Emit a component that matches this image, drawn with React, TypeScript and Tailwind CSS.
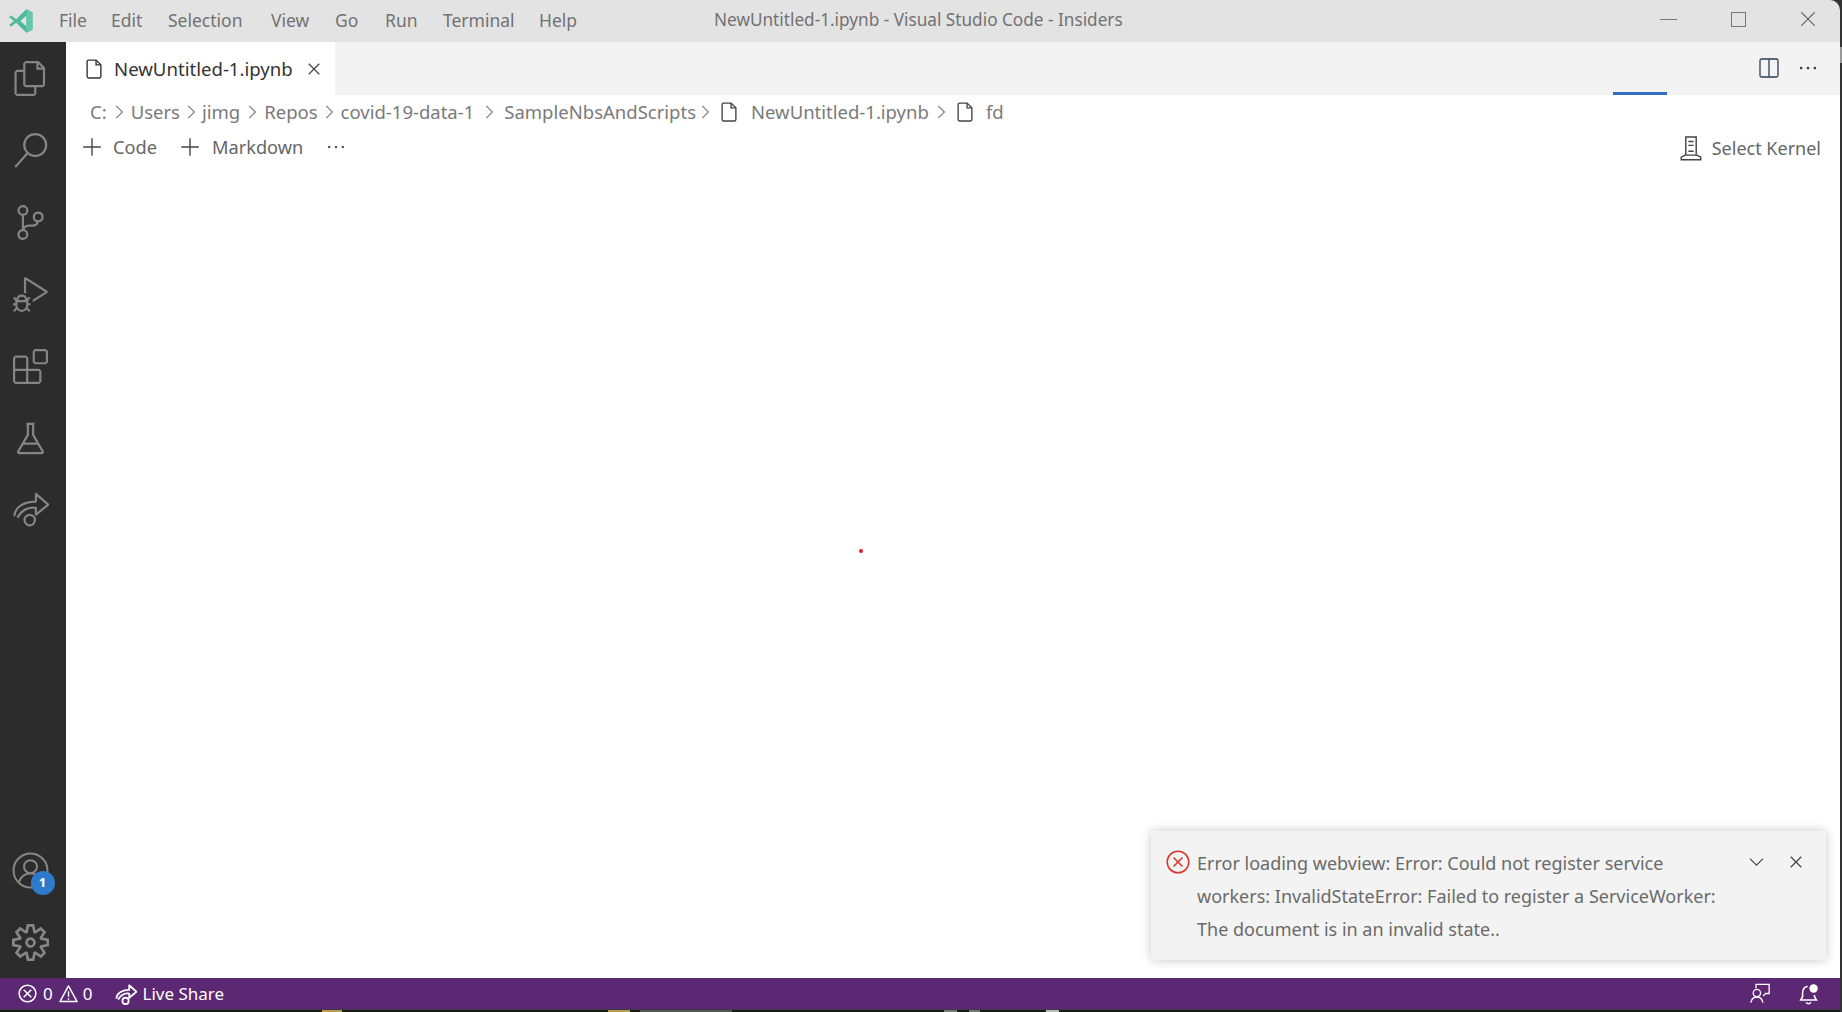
const font = { fontFamily: '"Noto Sans", "Open Sans", sans-serif' };

function Codicon({ d, size = 35, className = "" }: { d: string; size?: number; className?: string }) {
  return (
    <svg width={size} height={size} viewBox="0 0 24 24" fill="currentColor" className={className}>
      <path fillRule="evenodd" clipRule="evenodd" d={d} />
    </svg>
  );
}

const FILES =
  "M17.5 0h-9L7 1.5V6H2.5L1 7.5v15.07L2.5 24h12.07L16 22.57V18h4.7l1.3-1.43V4.5L17.5 0zm0 2.12l2.38 2.38H17.5V2.12zm-3 20.38h-12v-15H7v9.07L8.5 18h6v4.5zm6-6h-12v-15H16V6h4.5v10.5z";
const SEARCH =
  "M15.25 0a8.25 8.25 0 0 0-6.18 13.72L1 22.88l1.12 1 8.05-9.12A8.251 8.251 0 1 0 15.25.01V0zm0 15a6.75 6.75 0 1 1 0-13.5 6.75 6.75 0 0 1 0 13.5z";
const SCM =
  "M21.007 8.222A3.738 3.738 0 0 0 15.045 5.2a3.737 3.737 0 0 0 1.156 6.583 2.988 2.988 0 0 1-2.668 1.67h-2.99a4.456 4.456 0 0 0-2.989 1.165V7.4a3.737 3.737 0 1 0-1.494 0v9.117a3.776 3.776 0 1 0 1.816.099 2.99 2.99 0 0 1 2.668-1.667h2.99a4.484 4.484 0 0 0 4.223-3.039 3.736 3.736 0 0 0 3.25-3.687zM4.565 3.738a2.242 2.242 0 1 1 4.484 0 2.242 2.242 0 0 1-4.484 0zm4.484 16.441a2.242 2.242 0 1 1-4.484 0 2.242 2.242 0 0 1 4.484 0zm8.221-9.715a2.242 2.242 0 1 1 0-4.485 2.242 2.242 0 0 1 0 4.485z";
const DEBUG =
  "M10.94 13.5l-1.32 1.32a3.73 3.73 0 0 0-7.24 0L1.06 13.5 0 14.56l1.72 1.72-.22.22V18H0v1.5h1.5v.08c.077.489.214.966.41 1.42L0 22.94 1.06 24l1.65-1.65A4.308 4.308 0 0 0 6 24a4.31 4.31 0 0 0 3.29-1.65L10.94 24 12 22.94 10.09 21c.198-.464.336-.951.41-1.45v-.1H12V18h-1.5v-1.5l-.22-.22L12 14.56l-1.06-1.06zM6 13.5a2.25 2.25 0 0 1 2.25 2.25h-4.5A2.25 2.25 0 0 1 6 13.5zm3 6a3.33 3.33 0 0 1-3 3 3.33 3.33 0 0 1-3-3v-2.25h6v2.25zm14.76-9.9v1.26L13.5 17.37V15.6l8.5-5.37L9 2v9.46a5.07 5.07 0 0 0-1.5-.72V.63L8.64 0l15.12 9.6z";
const EXTENSIONS =
  "M13.5 1.5L15 0h7.5L24 1.5V9l-1.5 1.5H15L13.5 9V1.5zm1.5 0V9h7.5V1.5H15zM0 15V6l1.5-1.5H9L10.5 6v7.5H18l1.5 1.5v7.5L18 24H1.5L0 22.5V15zm9-1.5V6H1.5v7.5H9zM9 15H1.5v7.5H9V15zm1.5 7.5H18V15h-7.5v7.5z";
const GEAR =
  "M19.85 8.75l4.15.83v4.84l-4.15.83 2.35 3.52-3.43 3.43-3.52-2.35-.83 4.15H9.58l-.83-4.15-3.52 2.35-3.43-3.43 2.35-3.52L0 14.42V9.58l4.15-.83L1.8 5.23 5.23 1.8l3.52 2.35L9.58 0h4.84l.83 4.15 3.52-2.35 3.43 3.43-2.35 3.52zm-1.57 5.07l4-.81v-2l-4-.81-.54-1.3 2.29-3.43-1.43-1.43-3.43 2.29-1.3-.54-.81-4h-2l-.81 4-1.3.54-3.43-2.29-1.43 1.43L6.38 8.9l-.54 1.3-4 .81v2l4 .81.54 1.3-2.29 3.43 1.43 1.43 3.43-2.29 1.3.54.81 4h2l.81-4 1.3-.54 3.43 2.29 1.43-1.43-2.29-3.43.54-1.3zm-8.186-4.672A3.43 3.43 0 0 1 12 8.57 3.44 3.44 0 0 1 15.43 12a3.43 3.43 0 1 1-5.336-2.852zm.956 4.274c.281.188.612.288.95.288A1.7 1.7 0 0 0 13.71 12a1.71 1.71 0 1 0-2.66 1.422z";

function Stroke({ size, children, w = 1.2, vb = 24, className = "" }: { size: number; children: React.ReactNode; w?: number; vb?: number; className?: string }) {
  return (
    <svg width={size} height={size} viewBox={`0 0 ${vb} ${vb}`} fill="none" stroke="currentColor" strokeWidth={w} className={className}>
      {children}
    </svg>
  );
}

function FileIcon({ size = 20 }: { size?: number }) {
  return (
    <Stroke size={size} w={1} vb={16}>
      <path d="M3 2.5 a1 1 0 0 1 1-1 h5.5 l3.5 3.5 v8.5 a1 1 0 0 1-1 1 h-8 a1 1 0 0 1-1-1 z" />
      <path d="M9.5 1.5 v3.5 h3.5" />
    </Stroke>
  );
}

function CloseIcon({ size = 16, w = 1.3 }: { size?: number; w?: number }) {
  return (
    <Stroke size={size} w={w} vb={16}>
      <path d="M2 2 L14 14 M14 2 L2 14" />
    </Stroke>
  );
}

function Chevron() {
  return (
    <Stroke size={18} w={1} vb={16} className="text-[#7a7a7a]">
      <path d="M5.5 2.5 L11 8 L5.5 13.5" />
    </Stroke>
  );
}

function LiveShareIcon({ size = 35, w = 1.5 }: { size?: number; w?: number }) {
  return (
    <Stroke size={size} w={w}>
      <path d="M1.5 17 C2 10.5 8.5 7.5 15.5 7.5 V2.5 L23.5 9.5 L15.5 16 V11.5 C11 11 6.5 12.5 3.5 18" strokeLinejoin="round" />
      <circle cx="11.5" cy="19.5" r="3.4" />
    </Stroke>
  );
}

function Logo() {
  return (
    <svg width="26" height="26" viewBox="0 0 24 24">
      <path d="M17 1.2 L22.6 4 V20 L17 22.8 L7.5 13.6 L3 17 L1 15.6 L5.5 12 L1 8.4 L3 7 L7.5 10.4 Z M17 7 L11.5 12 L17 17 Z" fill="#4fb99b" fillRule="evenodd" />
      <path d="M17 1.2 L22.6 4 V20 L17 22.8 V17 L17 7 Z" fill="#67c7ad" />
    </svg>
  );
}

function Crumb({ text }: { text: string }) {
  return <span className="text-[#7a7a7a]">{text}</span>;
}

const menus: [string, string][] = [
  ["File", "w-[52px]"],
  ["Edit", "w-[57px]"],
  ["Selection", "w-[103px]"],
  ["View", "w-[64px]"],
  ["Go", "w-[50px]"],
  ["Run", "w-[58px]"],
  ["Terminal", "w-[96px]"],
  ["Help", "w-[50px]"],
];

function TitleBar() {
  return (
    <div className="relative flex h-[42px] shrink-0 items-center bg-[#e3e3e3] pb-[2px] text-[17.5px] text-[#727272]">
      <div className="flex w-[59px] shrink-0 justify-center pr-[17px] pt-[2px]">
        <Logo />
      </div>
      {menus.map(([m, w]) => (
        <span key={m} className={w}>
          {m}
        </span>
      ))}
      <span className="absolute left-[714px] top-[7px] text-[17.2px]">NewUntitled-1.ipynb - Visual Studio Code - Insiders</span>
      <div className="ml-auto flex items-center pb-[2px] text-[#6b6b6b]">
        <div className="flex w-[68px] justify-center">
          <div className="h-[1px] w-[17px] bg-[#777]" />
        </div>
        <div className="flex w-[70px] justify-center pl-[2px]">
          <div className="h-[15px] w-[15px] border border-[#777]" />
        </div>
        <div className="flex w-[68px] justify-center pl-[3px]">
          <CloseIcon size={18} w={1} />
        </div>
      </div>
    </div>
  );
}

function ActivityBar() {
  const top = [FILES, SEARCH, SCM, DEBUG, EXTENSIONS];
  return (
    <div className="flex w-[66px] shrink-0 flex-col bg-[#2c2c2c] text-[#858585]">
      {top.map((d) => (
        <div key={d} className="flex h-[72px] items-center justify-center pr-[6px]">
          <Codicon d={d} />
        </div>
      ))}
      <div className="flex h-[72px] items-center justify-center pr-[6px]">
        <Stroke size={35} w={1.5}>
          <path d="M9.2 2 H14.8 M10.2 2 V9.5 L3.5 21 A0.8 0.8 0 0 0 4.2 22 H19.8 A0.8 0.8 0 0 0 20.5 21 L13.8 9.5 V2 M7 15.5 H17" />
        </Stroke>
      </div>
      <div className="flex h-[72px] items-center justify-center pb-[3px] pr-[6px]">
        <LiveShareIcon size={37} w={1.4} />
      </div>
      <div className="mt-auto flex h-[72px] items-center justify-center pr-[6px]">
        <div className="relative">
          <Stroke size={37} w={1.3}>
            <circle cx="12" cy="12" r="11" />
            <circle cx="12" cy="9.5" r="4.2" />
            <path d="M4.5 19.5 C6 15.5 9 14 12 14 C15 14 18 15.5 19.5 19.5" />
          </Stroke>
          <span className="absolute left-[19px] top-[19px] flex h-[24px] w-[24px] items-center justify-center rounded-full bg-[#2f7bcb] text-[13px] font-bold text-white">
            1
          </span>
        </div>
      </div>
      <div className="flex h-[72px] items-center justify-center pr-[6px]">
        <Codicon d={GEAR} size={37} />
      </div>
    </div>
  );
}

function TabBar() {
  return (
    <div className="relative flex h-[53px] shrink-0 bg-[#f3f3f3]">
      <div className="flex w-[269px] items-center bg-white pl-[17px] pt-[1px] text-[18.6px] text-[#333]">
        <FileIcon size={22} />
        <span className="ml-[9px]">NewUntitled-1.ipynb</span>
        <span className="ml-[14px] text-[#424242]">
          <CloseIcon size={14} w={1.4} />
        </span>
      </div>
      <div className="ml-auto flex items-center gap-[18px] pb-[2px] pr-[21px] text-[#424242]">
        <svg width="20" height="20" viewBox="0 0 20 20" fill="none" stroke="#2f3f55" strokeWidth="1.3">
          <rect x="1" y="1" width="18" height="18" rx="1.5" />
          <path d="M10 1 V19" />
        </svg>
        <Stroke size={22} w={0} vb={16} className="fill-current">
          <circle cx="3" cy="8" r="1" />
          <circle cx="8" cy="8" r="1" />
          <circle cx="13" cy="8" r="1" />
        </Stroke>
      </div>
      <div className="absolute bottom-0 left-[1547px] h-[3px] w-[54px] bg-[#2f6fbf]" />
    </div>
  );
}

function Breadcrumbs() {
  return (
    <div className="flex h-[34px] shrink-0 items-center pl-[24px] text-[18.5px]">
      <Crumb text="C:" />
      <span className="ml-[3px]"><Chevron /></span>
      <span className="ml-[3px]"><Crumb text="Users" /></span>
      <span className="ml-[2px]"><Chevron /></span>
      <span className="ml-[2px]"><Crumb text="jimg" /></span>
      <span className="ml-[3px]"><Chevron /></span>
      <span className="ml-[3px]"><Crumb text="Repos" /></span>
      <span className="ml-[2px]"><Chevron /></span>
      <span className="ml-[3px]"><Crumb text="covid-19-data-1" /></span>
      <span className="ml-[6px]"><Chevron /></span>
      <span className="ml-[6px]"><Crumb text="SampleNbsAndScripts" /></span>
      <span className="ml-0"><Chevron /></span>
      <span className="ml-[4px] text-[#444]"><FileIcon size={22} /></span>
      <span className="ml-[11px]"><Crumb text="NewUntitled-1.ipynb" /></span>
      <span className="ml-[3px]"><Chevron /></span>
      <span className="ml-[4px] text-[#444]"><FileIcon size={22} /></span>
      <span className="ml-[10px]"><Crumb text="fd" /></span>
    </div>
  );
}

function Plus() {
  return (
    <Stroke size={20} w={1.1} vb={16} className="mb-[2px] text-[#444]">
      <path d="M8 1 V15 M1 8 H15" />
    </Stroke>
  );
}

function NotebookToolbar() {
  return (
    <div className="flex h-[38px] shrink-0 items-center pl-[16px] pr-[19px] text-[18.2px] text-[#666]">
      <Plus />
      <span className="ml-[11px]">Code</span>
      <span className="ml-[23px]"><Plus /></span>
      <span className="ml-[12px]">Markdown</span>
      <span className="ml-[22px] mb-[2px] text-[#555]">
        <Stroke size={22} w={0} vb={16} className="fill-current">
          <circle cx="3" cy="8" r="0.9" />
          <circle cx="8" cy="8" r="0.9" />
          <circle cx="13" cy="8" r="0.9" />
        </Stroke>
      </span>
      <div className="ml-auto flex items-center gap-[8px] text-[18px]">
        <Stroke size={26} w={1.1} vb={20} className="text-[#444]">
          <path d="M6 1.5 H14 V15.5 H6 Z M8 5 H12 M8 8 H12 M8 12.5 H12 M5.5 15.5 L2.5 17 V19 H17.5 V17 L14.5 15.5" />
        </Stroke>
        <span>Select Kernel</span>
      </div>
    </div>
  );
}

function Notification() {
  return (
    <div className="absolute right-[14px] top-[789px] flex h-[129px] w-[675px] bg-[#f3f3f3] pl-[15px] pt-[16px] text-[18px] leading-[33px] text-[#6a6a6a] shadow-[0_0_10px_rgba(0,0,0,0.22)]">
      <div className="mt-[3px] h-[24px] w-[24px] shrink-0 text-[#d8352a]">
        <svg width="24" height="24" viewBox="0 0 24 24" fill="none" stroke="currentColor" strokeWidth="1.5">
          <circle cx="12" cy="12" r="10.8" />
          <path d="M7.5 7.5 L16.5 16.5 M16.5 7.5 L7.5 16.5" />
        </svg>
      </div>
      <p className="ml-[7px] w-[540px]">
        Error loading webview: Error: Could not register service workers: InvalidStateError: Failed to register a ServiceWorker: The document is in an invalid state..
      </p>
      <div className="absolute right-[23px] top-[23px] flex items-center gap-[25px] text-[#444]">
        <Stroke size={15} w={1.2} vb={16}>
          <path d="M1 5 L8 12 L15 5" />
        </Stroke>
        <CloseIcon size={14} w={1.4} />
      </div>
    </div>
  );
}

function StatusBar() {
  return (
    <div className="flex h-[31px] shrink-0 items-center bg-[#5c2873] pl-[18px] pr-[20px] text-[17px] text-white">
      <Stroke size={19} w={1.6} vb={20}>
        <circle cx="10" cy="10" r="8.8" />
        <path d="M6 6 L14 14 M14 6 L6 14" />
      </Stroke>
      <span className="ml-[6px]">0</span>
      <span className="ml-[6px]">
        <Stroke size={19} w={1.5} vb={20}>
          <path d="M10 2 L19 18.5 H1 Z M10 7.5 V13.5 M10 15 V16.5" strokeLinejoin="round" />
        </Stroke>
      </span>
      <span className="ml-[5px]">0</span>
      <span className="ml-[23px]">
        <LiveShareIcon size={22} w={2} />
      </span>
      <span className="ml-[5px]">Live Share</span>
      <div className="ml-auto flex items-center gap-[28px]">
        <Stroke size={21} w={1.5}>
          <path d="M8 6 V1.5 H23 V12 H19 L16 15" />
          <circle cx="9" cy="11.5" r="4.2" />
          <path d="M2 22.5 C3 18 6 16 9 16 C12 16 15 18 16 22.5" />
        </Stroke>
        <svg width="22" height="22" viewBox="0 0 24 24" fill="none" stroke="currentColor" strokeWidth="1.7">
          <path d="M10.5 3.5 C6.5 4.5 5 8 5 11 V15 L3 18.5 H20 L18 15 V13" />
          <path d="M9 21 A2.8 2.8 0 0 0 14 21" />
          <circle cx="17" cy="6" r="4.6" fill="currentColor" stroke="none" />
        </svg>
      </div>
    </div>
  );
}

function Taskbar() {
  return (
    <div className="relative h-[3px] shrink-0 border-t border-[#3c3c3c] bg-[#1a1a1a]">
      <div className="absolute left-[322px] top-0 h-[2px] w-[20px] bg-[#b79c57]" />
      <div className="absolute left-[608px] top-0 h-[2px] w-[22px] bg-[#b79c57]" />
      <div className="absolute left-[640px] top-0 h-[2px] w-[92px] bg-[#8f8f8f]/50" />
      <div className="absolute left-[944px] top-0 h-[2px] w-[13px] bg-[#777]" />
      <div className="absolute left-[969px] top-0 h-[2px] w-[11px] bg-[#777]" />
      <div className="absolute left-[1046px] top-0 h-[2px] w-[13px] bg-[#bbb]" />
    </div>
  );
}

export default function App() {
  return (
    <div className="flex h-[1012px] w-[1842px] overflow-hidden bg-[#333]" style={font}>
      <div className="flex w-[1840px] shrink-0 flex-col overflow-hidden rounded-tr-[10px]">
        <TitleBar />
        <div className="flex min-h-0 flex-1">
          <ActivityBar />
          <div className="relative flex min-w-0 flex-1 flex-col bg-white">
            <TabBar />
            <Breadcrumbs />
            <NotebookToolbar />
            <div className="absolute left-[793px] top-[507px] h-[4px] w-[4px] rounded-full bg-[#e02020]" />
            <Notification />
          </div>
        </div>
        <StatusBar />
        <Taskbar />
      </div>
      <div className="relative flex-1">
        <div className="absolute left-0 top-[47px] h-[16px] w-[2px] bg-[#999]" />
      </div>
    </div>
  );
}
